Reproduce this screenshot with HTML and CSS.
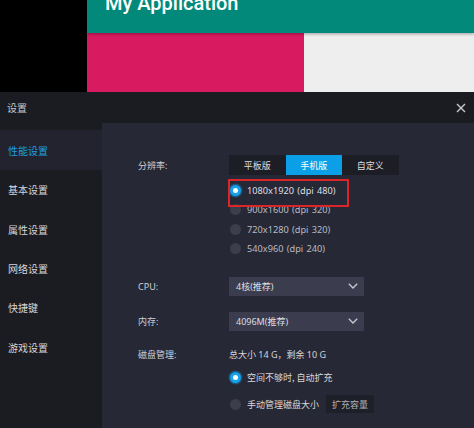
FILE: index.html
```html
<!DOCTYPE html>
<html lang="zh-CN">
<head>
<meta charset="utf-8">
<title>设置</title>
<link rel="stylesheet" href="styles.css">
</head>
<body>
<div class="app">
  <div class="top">
    <div class="black"></div>
    <div class="phone">
      <div class="appbar"><div class="app-title">My Application</div></div>
      <div class="blocks">
        <div class="pink"></div>
        <div class="grey"></div>
      </div>
    </div>
  </div>
  <div class="win">
    <div class="win-head">
      <span class="win-title">设置</span>
      <svg class="close" width="10" height="10" viewBox="0 0 10 10"><path d="M1 1L9 9M9 1L1 9" stroke="#c9cacf" stroke-width="1.4" fill="none"/></svg>
    </div>
    <div class="win-body">
      <div class="side">
        <div class="side-item active">性能设置</div>
        <div class="side-item">基本设置</div>
        <div class="side-item">属性设置</div>
        <div class="side-item">网络设置</div>
        <div class="side-item">快捷键</div>
        <div class="side-item">游戏设置</div>
      </div>
      <div class="panel">
        <div class="row row-res">
          <div class="label">分辨率:</div>
          <div class="tabs">
            <div class="tab">平板版</div>
            <div class="tab on">手机版</div>
            <div class="tab">自定义</div>
          </div>
        </div>
        <div class="radios">
          <div class="mark"></div>
          <div class="radio-row sel"><span class="radio checked"></span><span class="rtext">1080x1920 (dpi 480)</span></div>
          <div class="radio-row"><span class="radio"></span><span class="rtext">900x1600 (dpi 320)</span></div>
          <div class="radio-row"><span class="radio"></span><span class="rtext">720x1280 (dpi 320)</span></div>
          <div class="radio-row"><span class="radio"></span><span class="rtext">540x960 (dpi 240)</span></div>
        </div>
        <div class="row row-cpu">
          <div class="label">CPU:</div>
          <div class="select"><span>4核(推荐)</span><svg class="chev" width="10" height="6" viewBox="0 0 10 6"><path d="M0.8 0.8L5 5L9.2 0.8" stroke="#c9cacf" stroke-width="1.3" fill="none"/></svg></div>
        </div>
        <div class="row row-mem">
          <div class="label">内存:</div>
          <div class="select"><span>4096M(推荐)</span><svg class="chev" width="10" height="6" viewBox="0 0 10 6"><path d="M0.8 0.8L5 5L9.2 0.8" stroke="#c9cacf" stroke-width="1.3" fill="none"/></svg></div>
        </div>
        <div class="row row-disk">
          <div class="label">磁盘管理:</div>
          <div class="disk-text">总大小 14 G，剩余 10 G</div>
        </div>
        <div class="row row-auto">
          <div class="label"></div>
          <div class="radio-row"><span class="radio checked"></span><span class="rtext light">空间不够时, 自动扩充</span></div>
        </div>
        <div class="row row-manual">
          <div class="label"></div>
          <div class="radio-row"><span class="radio"></span><span class="rtext light">手动管理磁盘大小</span></div>
          <div class="btn">扩充容量</div>
        </div>
        <div class="row row-bottom">
          <div class="label"></div>
          <div class="bottom-box"></div>
        </div>
      </div>
    </div>
  </div>
</div>
</body>
</html>
```

FILE: styles.css
```css
* { box-sizing: border-box; margin: 0; padding: 0; }
html, body { width: 474px; height: 428px; overflow: hidden; background: #000; }
body { font-family: "Noto Sans", "Noto Sans CJK SC", sans-serif; }

.app { width: 474px; height: 428px; display: flex; flex-direction: column; overflow: hidden; }

.top { display: flex; height: 92px; flex: none; }
.black { width: 87px; background: #000; }
.phone { flex: 1; display: flex; flex-direction: column; }
.appbar {
  height: 33px; flex: none; background: #03897a; position: relative; z-index: 1;
  box-shadow: 0 1px 3px rgba(0,0,0,0.35); padding-left: 18px; overflow: hidden;
}
.app-title {
  font-family: Roboto, "Noto Sans", sans-serif; font-weight: 500; font-size: 20px;
  line-height: 20px; color: #fff; margin-top: -7px;
}
.blocks { flex: 1; display: flex; }
.pink { width: 217px; background: #d81b60; }
.grey { flex: 1; background: #eeeeee; }

.win { flex: 1; min-height: 0; display: flex; flex-direction: column; background: #1b1c22; overflow: hidden; }
.win-head {
  height: 31px; flex: none; display: flex; align-items: center; justify-content: space-between;
  padding: 0 8px 0 7px;
}
.win-title { font-size: 10px; color: #c6c7cc; font-family: "Noto Sans CJK SC", sans-serif; }
.close { display: block; }

.win-body { flex: 1; min-height: 0; display: flex; }
.side { width: 102px; flex: none; padding-top: 7px; background: #1b1c22; }
.side-item {
  height: 39.4px; display: flex; align-items: center; padding-left: 8px;
  font-family: "Noto Sans CJK SC", sans-serif; font-size: 10px; color: #d6d7db;
}
.side-item.active { background: #22232e; color: #1e9fe0; height: 40px; }

.panel {
  flex: 1; background: #262836; padding: 32px 0 0 36px;
  font-family: "Noto Sans", "Noto Sans CJK SC", sans-serif; font-size: 9px; color: #d4d5da;
}
.row { display: flex; align-items: center; }
.label { width: 91px; flex: none; color: #cfd0d5; font-family: "Noto Sans", "Noto Sans CJK SC", sans-serif; }

.tabs { display: flex; height: 20px; background: #1c1d25; }
.tab {
  width: 56.5px; display: flex; align-items: center; justify-content: center;
  color: #dcdde1; font-family: "Noto Sans CJK SC", sans-serif;
}
.tab.on { background: #0a9fe6; color: #fff; }

.radios { margin-left: 91px; margin-top: 5.5px; position: relative; }
.radio-row { height: 19.5px; display: flex; align-items: center; padding-left: 1px; }
.radio {
  width: 11px; height: 11px; border-radius: 50%; background: #3c3e4b; flex: none;
  margin-right: 6px;
}
.radio.checked {
  background: #fff; border: 3px solid #16a2ea;
  box-shadow: 0 0 0 1.5px rgba(22,162,234,0.35);
}
.rtext { color: #b9bac0; word-spacing: 1px; font-size: 9.2px; }
.radio-row.sel .rtext { color: #dedfe3; }
.rtext.light { color: #d8d9dd; font-family: "Noto Sans CJK SC", sans-serif; word-spacing: 0; font-size: 9px; }
.mark {
  position: absolute; left: -1px; top: -1.5px; width: 121px; height: 28px;
  border: 2px solid #dc2529; pointer-events: none;
}

.row-cpu { margin-top: 18.5px; }
.row-mem { margin-top: 16.5px; }
.select {
  width: 135px; height: 18.5px; background: #3b3d4e; display: flex; align-items: center;
  justify-content: space-between; padding: 0 6px 0 7px; color: #dcdde1;
}
.chev { display: block; }

.row-disk { margin-top: 15px; height: 18px; }
.disk-text { color: #d4d5da; }
.row-auto { margin-top: 4px; }
.row-manual { margin-top: 7.5px; }
.btn {
  margin-left: 7px; width: 48px; height: 18px; background: #1e1f28; color: #aeafb5;
  display: flex; align-items: center; justify-content: center;
  font-family: "Noto Sans CJK SC", sans-serif;
}
.row-bottom { margin-top: 14px; }
.bottom-box { width: 69px; height: 20px; background: #1c1d24; }
```
